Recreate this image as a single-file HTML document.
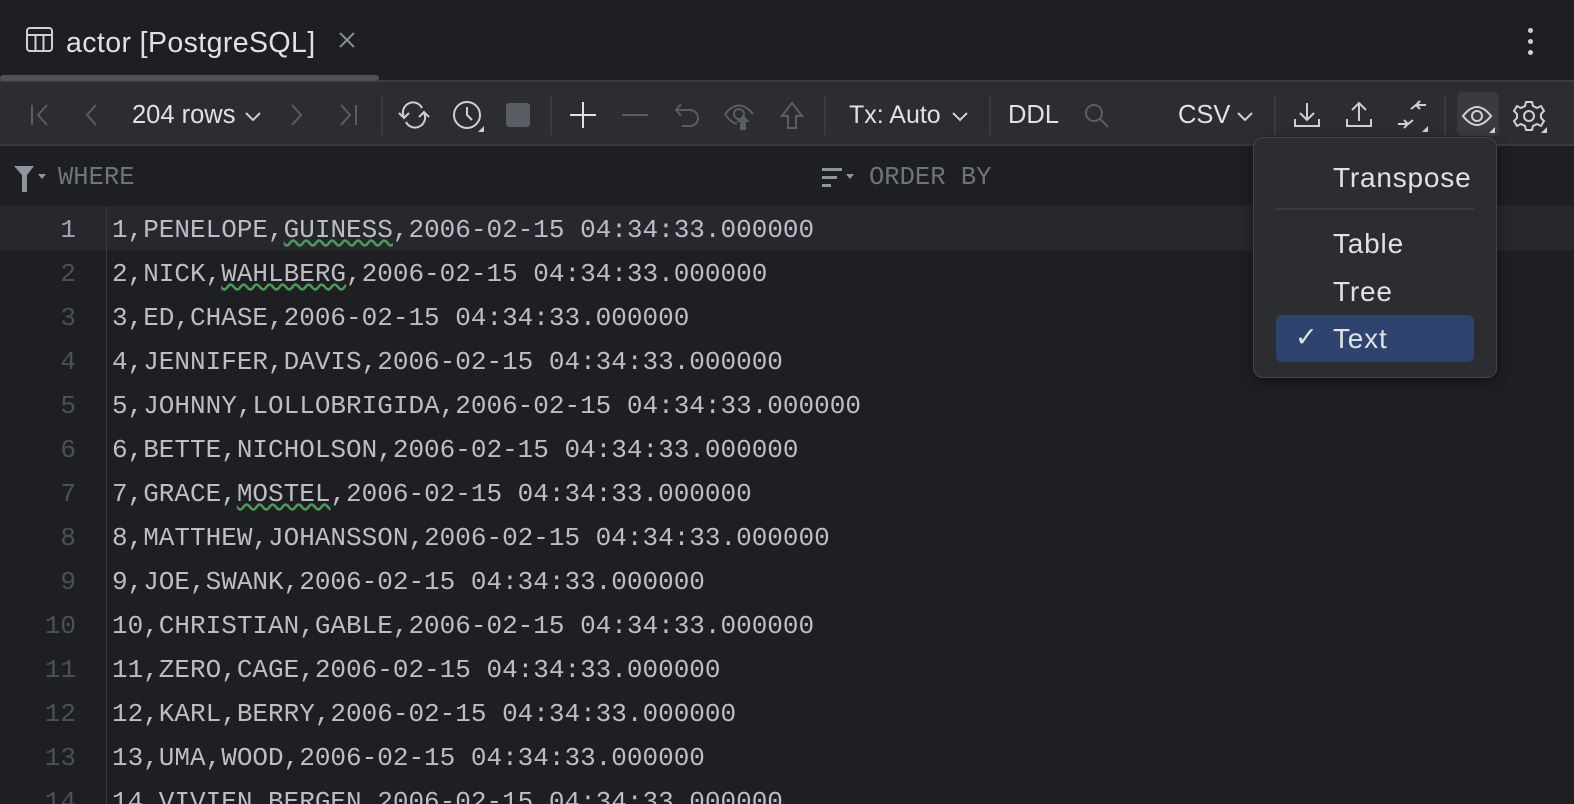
<!DOCTYPE html>
<html style="width:1574px;height:804px;overflow:hidden"><head><meta charset="utf-8"><style>
*{margin:0;padding:0;box-sizing:border-box}
body{width:1574px;height:804px;background:#1e1f22;overflow:hidden;position:relative;font-family:"Liberation Sans",sans-serif;color:#dfe1e5}
.a{position:absolute}
.s{font-size:25.5px;color:#dfe1e5;white-space:nowrap}
.mono{font-family:"Liberation Mono",monospace;font-size:26px;white-space:pre}
.ln{position:absolute;left:0;width:76px;text-align:right;color:#4b5059}
.tx{position:absolute;left:112px;color:#bcbec4}
.sep{position:absolute;top:95px;width:2px;height:40px;background:#393b40}
svg{position:absolute;overflow:visible}
.mi{position:absolute;left:1333px;font-size:28px;letter-spacing:0.8px;color:#dfe1e5}
</style></head><body>
<svg style="left:26px;top:27px" width="28" height="28" viewBox="0 0 28 28" fill="none" stroke="#ced0d6" stroke-width="2"><rect x="1" y="1" width="25" height="23" rx="3"/><line x1="1" y1="8" x2="26" y2="8"/><line x1="9.5" y1="8" x2="9.5" y2="24"/><line x1="17.5" y1="8" x2="17.5" y2="24"/></svg>
<div class="a" style="left:66px;top:27px;font-size:28.5px;letter-spacing:0.4px;color:#dfe1e5">actor [PostgreSQL]</div>
<svg style="left:339px;top:32px" width="16" height="16" stroke="#868a91" stroke-width="2"><line x1="1" y1="1" x2="15" y2="15"/><line x1="15" y1="1" x2="1" y2="15"/></svg>
<div class="a" style="left:1528px;top:28px;width:5px;height:5px;border-radius:50%;background:#ced0d6;box-shadow:0 11px 0 #ced0d6,0 22px 0 #ced0d6"></div>
<div class="a" style="left:0;top:80px;width:1574px;height:2px;background:#393b40"></div>
<div class="a" style="left:0;top:75px;width:379px;height:6px;border-radius:3px;background:#4e5157"></div>
<div class="a" style="left:0;top:82px;width:1574px;height:62px;background:#2b2d30"></div>
<div class="a" style="left:0;top:144px;width:1574px;height:2px;background:#393b40"></div>
<svg style="left:30px;top:104px" width="22" height="22" fill="none" stroke="#5a5d63" stroke-width="2"><line x1="2" y1="1" x2="2" y2="21"/><polyline points="17,1 8,11 17,21"/></svg>
<svg style="left:84px;top:104px" width="14" height="22" fill="none" stroke="#5a5d63" stroke-width="2"><polyline points="12,1 3,11 12,21"/></svg>
<div class="a s" style="left:132px;top:101px">204 rows</div>
<svg style="left:245px;top:112px" width="16" height="10" fill="none" stroke="#ced0d6" stroke-width="2"><polyline points="1,1 8,8 15,1"/></svg>
<svg style="left:290px;top:104px" width="14" height="22" fill="none" stroke="#5a5d63" stroke-width="2"><polyline points="2,1 11,11 2,21"/></svg>
<svg style="left:336px;top:104px" width="22" height="22" fill="none" stroke="#5a5d63" stroke-width="2"><line x1="20" y1="1" x2="20" y2="21"/><polyline points="5,1 14,11 5,21"/></svg>
<div class="sep" style="left:381px"></div>
<svg style="left:398px;top:101px" width="32" height="28" fill="none" stroke="#ced0d6" stroke-width="2"><path d="M6 16 A10 10 0 0 1 24 7"/><path d="M26 12 A10 10 0 0 1 8 21"/><polyline points="1,12 6,17 11,12"/><polyline points="21,16 26,11 31,16"/></svg>
<svg style="left:452px;top:100px" width="34" height="34" fill="none" stroke="#ced0d6" stroke-width="2"><circle cx="15" cy="15" r="13"/><polyline points="15,7 15,15 20,20"/><path d="M26 32 L32 32 L32 26 Z" fill="#ced0d6" stroke="none"/></svg>
<div class="a" style="left:506px;top:103px;width:24px;height:24px;border-radius:3px;background:#5a5d63"></div>
<div class="sep" style="left:550px"></div>
<svg style="left:569px;top:101px" width="28" height="28" fill="none" stroke="#dfe1e5" stroke-width="2"><line x1="14" y1="1" x2="14" y2="27"/><line x1="1" y1="14" x2="27" y2="14"/></svg>
<svg style="left:621px;top:114px" width="28" height="4" stroke="#5a5d63" stroke-width="2"><line x1="1" y1="1" x2="27" y2="1"/></svg>
<svg style="left:674px;top:101px" width="28" height="28" fill="none" stroke="#5a5d63" stroke-width="2"><polyline points="7,3 2,9 7,15"/><path d="M2 9 H16 A8 8 0 0 1 16 25 H8"/></svg>
<svg style="left:723px;top:101px" width="34" height="30" fill="none" stroke="#5a5d63" stroke-width="2"><path d="M2 13 Q16 -4 30 13"/><path d="M2 13 Q8 22 14 23"/><circle cx="16" cy="13" r="5"/><path d="M17 29 V21 H13 L20 14 L27 21 H23 V29 Z" fill="#5a5d63" stroke="none"/></svg>
<svg style="left:780px;top:101px" width="24" height="28" fill="none" stroke="#5a5d63" stroke-width="2"><path d="M8 27 V15 H2 L12 2 L22 15 H16 V27 Z"/></svg>
<div class="sep" style="left:824px"></div>
<div class="a s" style="left:849px;top:101px;font-size:25px">Tx: Auto</div>
<svg style="left:952px;top:112px" width="16" height="10" fill="none" stroke="#ced0d6" stroke-width="2"><polyline points="1,1 8,8 15,1"/></svg>
<div class="sep" style="left:989px"></div>
<div class="a s" style="left:1008px;top:101px">DDL</div>
<svg style="left:1084px;top:103px" width="26" height="26" fill="none" stroke="#5a5d63" stroke-width="2"><circle cx="10" cy="10" r="8"/><line x1="16" y1="16" x2="24" y2="24"/></svg>
<div class="a s" style="left:1178px;top:101px">CSV</div>
<svg style="left:1237px;top:112px" width="16" height="10" fill="none" stroke="#ced0d6" stroke-width="2"><polyline points="1,1 8,8 15,1"/></svg>
<div class="sep" style="left:1274px"></div>
<svg style="left:1294px;top:101px" width="26" height="28" fill="none" stroke="#ced0d6" stroke-width="2"><line x1="13" y1="2" x2="13" y2="18"/><polyline points="6,12 13,19 20,12"/><polyline points="1,18 1,25 25,25 25,18"/></svg>
<svg style="left:1346px;top:101px" width="26" height="28" fill="none" stroke="#ced0d6" stroke-width="2"><line x1="13" y1="3" x2="13" y2="20"/><polyline points="6,9 13,2 20,9"/><polyline points="1,18 1,25 25,25 25,18"/></svg>
<svg style="left:1396px;top:101px" width="34" height="32" fill="none" stroke="#ced0d6" stroke-width="2"><polyline points="15,8 20,4 30,4"/><polyline points="24,0 20,4 24,8"/><polyline points="2,23 12,23 17,19"/><polyline points="8,19 12,23 8,27"/><path d="M26 31 L32 31 L32 25 Z" fill="#ced0d6" stroke="none"/></svg>
<div class="sep" style="left:1444px"></div>
<div class="a" style="left:1457px;top:92px;width:42px;height:44px;border-radius:6px;background:#393b40"></div>
<svg style="left:1461px;top:102px" width="34" height="32" fill="none" stroke="#ced0d6" stroke-width="2"><path d="M2 14 Q16 -4 30 14 Q16 32 2 14 Z"/><circle cx="16" cy="14" r="5"/><path d="M28 31 L34 31 L34 25 Z" fill="#ced0d6" stroke="none"/></svg>
<svg style="left:1513px;top:100px" width="34" height="34" fill="none" stroke="#ced0d6" stroke-width="2"><path d="M13 2 H19 L20 6 L24 8 L28 6 L31 11 L28 14 L28 18 L31 21 L28 26 L24 24 L20 26 L19 30 H13 L12 26 L8 24 L4 26 L1 21 L4 18 L4 14 L1 11 L4 6 L8 8 L12 6 Z"/><circle cx="16" cy="16" r="5"/><path d="M28 33 L34 33 L34 27 Z" fill="#ced0d6" stroke="none"/></svg>
<svg style="left:14px;top:166px" width="32" height="26"><path d="M0 0 H20 L13 9 V26 H8 V9 Z" fill="#8f959e"/><path d="M24 8 H32 L28 13 Z" fill="#8f959e"/></svg>
<div class="a mono" style="left:58px;top:163px;color:#6f737a;font-size:25.5px">WHERE</div>
<svg style="left:822px;top:168px" width="34" height="22"><rect x="0" y="0" width="20" height="3" fill="#8f959e"/><rect x="0" y="8" width="15" height="3" fill="#8f959e"/><rect x="0" y="16" width="9" height="3" fill="#8f959e"/><path d="M24 6 H32 L28 11 Z" fill="#8f959e"/></svg>
<div class="a mono" style="left:869px;top:163px;color:#6f737a;font-size:25.5px">ORDER BY</div>
<div class="a" style="left:0;top:206px;width:1574px;height:44px;background:#26282e"></div>
<div class="a" style="left:106px;top:206px;width:1px;height:598px;background:#393b40"></div>
<div class="a mono" style="left:0;top:208px;width:1574px;height:596px;overflow:hidden;line-height:44px">
<div class="ln" style="top:0;color:#a1a3ab">1</div><div class="tx" style="top:0">1,PENELOPE,<span style="text-decoration:underline wavy #4c9a5a">GUINESS</span>,2006-02-15 04:34:33.000000</div>
<div class="ln" style="top:44px">2</div><div class="tx" style="top:44px">2,NICK,<span style="text-decoration:underline wavy #4c9a5a">WAHLBERG</span>,2006-02-15 04:34:33.000000</div>
<div class="ln" style="top:88px">3</div><div class="tx" style="top:88px">3,ED,CHASE,2006-02-15 04:34:33.000000</div>
<div class="ln" style="top:132px">4</div><div class="tx" style="top:132px">4,JENNIFER,DAVIS,2006-02-15 04:34:33.000000</div>
<div class="ln" style="top:176px">5</div><div class="tx" style="top:176px">5,JOHNNY,LOLLOBRIGIDA,2006-02-15 04:34:33.000000</div>
<div class="ln" style="top:220px">6</div><div class="tx" style="top:220px">6,BETTE,NICHOLSON,2006-02-15 04:34:33.000000</div>
<div class="ln" style="top:264px">7</div><div class="tx" style="top:264px">7,GRACE,<span style="text-decoration:underline wavy #4c9a5a">MOSTEL</span>,2006-02-15 04:34:33.000000</div>
<div class="ln" style="top:308px">8</div><div class="tx" style="top:308px">8,MATTHEW,JOHANSSON,2006-02-15 04:34:33.000000</div>
<div class="ln" style="top:352px">9</div><div class="tx" style="top:352px">9,JOE,SWANK,2006-02-15 04:34:33.000000</div>
<div class="ln" style="top:396px">10</div><div class="tx" style="top:396px">10,CHRISTIAN,GABLE,2006-02-15 04:34:33.000000</div>
<div class="ln" style="top:440px">11</div><div class="tx" style="top:440px">11,ZERO,CAGE,2006-02-15 04:34:33.000000</div>
<div class="ln" style="top:484px">12</div><div class="tx" style="top:484px">12,KARL,BERRY,2006-02-15 04:34:33.000000</div>
<div class="ln" style="top:528px">13</div><div class="tx" style="top:528px">13,UMA,WOOD,2006-02-15 04:34:33.000000</div>
<div class="ln" style="top:572px">14</div><div class="tx" style="top:572px">14,VIVIEN,BERGEN,2006-02-15 04:34:33.000000</div>
</div>
<div class="a" style="left:1253px;top:137px;width:244px;height:241px;background:#2b2d30;border:1.5px solid #43454a;border-radius:10px;box-shadow:0 4px 12px rgba(0,0,0,.4)"></div>
<div class="mi" style="top:162px">Transpose</div>
<div class="a" style="left:1276px;top:208px;width:198px;height:2px;background:#393b40"></div>
<div class="mi" style="top:228px">Table</div>
<div class="mi" style="top:276px">Tree</div>
<div class="a" style="left:1276px;top:315px;width:198px;height:47px;border-radius:6px;background:#2e436e"></div>
<div class="a" style="left:1295px;top:322px;font-size:27px;color:#dfe1e5">✓</div>
<div class="mi" style="top:323px">Text</div>
</body></html>
